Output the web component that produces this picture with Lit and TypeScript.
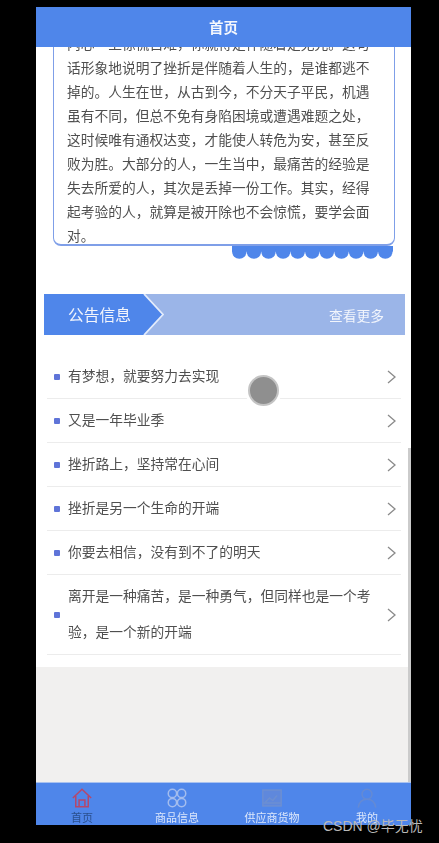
import { LitElement, html, css, svg } from "lit";
import { customElement } from "lit/decorators.js";

const para =
  "内心一上惊慌自难，你就得是伴随着是无光。这句话形象地说明了挫折是伴随着人生的，是谁都逃不掉的。人生在世，从古到今，不分天子平民，机遇虽有不同，但总不免有身陷困境或遭遇难题之处，这时候唯有通权达变，才能使人转危为安，甚至反败为胜。大部分的人，一生当中，最痛苦的经验是失去所爱的人，其次是丢掉一份工作。其实，经得起考验的人，就算是被开除也不会惊慌，要学会面对。";

const notices = [
  "有梦想，就要努力去实现",
  "又是一年毕业季",
  "挫折路上，坚持常在心间",
  "挫折是另一个生命的开端",
  "你要去相信，没有到不了的明天",
  "离开是一种痛苦，是一种勇气，但同样也是一个考验，是一个新的开端",
];

const icons = [
  svg`<path d="M1 12 L12 1.500 L23 12 M4.500 9.500 V22.500 H19.500 V9.500 M8.500 22.500 V14.500 H15.500 V22.500" />`,
  svg`<circle cx="6.500" cy="6.500" r="5"/><circle cx="17.500" cy="6.500" r="5"/><circle cx="6.500" cy="17.500" r="5"/><circle cx="17.500" cy="17.500" r="5"/>`,
  svg`<rect x="1" y="2.500" width="22" height="19" fill="#5f88dc"/><path d="M4 17 L9 12 L13 15 L18 9 M1 18 H23" />`,
  svg`<circle cx="12" cy="7.500" r="6"/><path d="M1.500 23.500 C2.500 16.500 7 13.500 12 13.500 C17 13.500 21.500 16.500 22.500 23.500" />`,
];
const tabs = [
  { label: "首页", cls: "active" },
  { label: "商品信息", cls: "light" },
  { label: "供应商货物", cls: "light2" },
  { label: "我的", cls: "dim" },
];
const scallops = Array.from({ length: 11 }, (_, i) => 7.3 + i * 14.6);

@customElement("app-root")
export class AppRoot extends LitElement {
  static styles = css`
    :host {
      display: block;
      width: 439px;
      height: 843px;
      background: #000;
      position: relative;
      overflow: hidden;
      font-family: "Liberation Sans", "Noto Sans CJK SC", sans-serif;
    }
    .phone {
      margin: 7px 0 0 36px;
      width: 375px;
      height: 818px;
      display: flex;
      flex-direction: column;
      background: #fff;
      filter: blur(0.4px);
    }
    .header {
      height: 40px;
      flex: none;
      background: #4f86ea;
      color: #f4f7fd;
      font-size: 14.500px;
      font-weight: 700;
      display: flex;
      align-items: center;
      justify-content: center;
      padding-bottom: 2px;
      box-sizing: border-box;
      position: relative;
      z-index: 1;
    }
    .main {
      flex: 1;
      min-height: 0;
      overflow: hidden;
      display: flex;
      flex-direction: column;
      position: relative;
    }
    .card-wrap {
      padding: 0 16px 0 17px;
      margin-top: -15px;
      flex: none;
    }
    .card {
      border: 1.500px solid #7f9fe8;
      border-bottom-width: 2px;
      border-radius: 8px;
      padding: 0 12px 0 13px;
      height: 214px;
      box-sizing: border-box;
      font-size: 13.750px;
      line-height: 24px;
      color: #4f4f4f;
      word-break: break-all;
      overflow: hidden;
      background: #fff;
    }
    .scallops {
      display: flex;
      justify-content: flex-end;
      padding: 0 18px 0 0;
      height: 13px;
      flex: none;
    }
    .scallops svg { display: block; fill: #4f86ea; }
    .band {
      margin: 35px 6px 0 8px;
      height: 41px;
      flex: none;
      background: #9bb5e8;
      display: flex;
      align-items: stretch;
      color: #f2f5fc;
    }
    .band-title {
      width: 99px;
      flex: none;
      background: #4f86ea;
      font-size: 15.750px;
      display: flex;
      align-items: center;
      padding-left: 24px;
      box-sizing: border-box;
    }
    .band svg { display: block; flex: none; }
    .band-more {
      flex: 1;
      font-size: 13.750px;
      display: flex;
      align-items: center;
      justify-content: flex-end;
      padding-right: 21px;
    }
    .list {
      margin: 20px 10px 0 11px;
      flex: none;
    }
    .row {
      display: flex;
      align-items: center;
      padding: 3.500px 0 3.500px 7px;
      border-bottom: 1px solid #ececec;
      font-size: 13.750px;
      color: #4f4f4f;
      line-height: 36px;
    }
    .dot {
      width: 6px;
      height: 6px;
      flex: none;
      background: #5f74d8;
      border-radius: 1px;
      margin-right: 8px;
    }
    .text { flex: 1; min-width: 0; }
    .row svg { flex: none; margin: 0 5px 0 8px; display: block; }
    .fill {
      flex: 1;
      background: #f1f0ef;
      margin-top: 12px;
    }
    .scrollbar {
      position: absolute;
      right: 0;
      top: 401px;
      bottom: 0;
      width: 3px;
      background: #cbcbcb;
    }
    .tabbar {
      height: 43px;
      flex: none;
      background: #4f86ea;
      border-top: 1px solid #a9c2f0;
      box-sizing: border-box;
      display: grid;
      grid-template-columns: repeat(4, 95px);
      margin: 0;
      padding: 0;
      overflow: hidden;
    }
    .tab {
      display: flex;
      flex-direction: column;
      align-items: center;
      font-size: 11px;
      line-height: 14px;
      padding-top: 5px;
      position: relative;
      left: -1.500px;
    }
    .tab svg {
      width: 20px;
      height: 20px;
      display: block;
      fill: none;
      stroke-width: 1.800;
      margin-bottom: 3px;
    }
    .active { color: #2a4f8e; }
    .active svg { stroke: #b5476b; }
    .light { color: #dce7fb; }
    .light svg { stroke: #a4bdee; }
    .light2 { color: #dce7fb; }
    .light2 svg { stroke: #6c8fd2; }
    .dim { color: #dce7fb; }
    .dim svg { stroke: #648ad4; }
    .touch {
      position: absolute;
      left: 247.500px;
      top: 375px;
      width: 31px;
      height: 31px;
      border-radius: 50%;
      background: #8f8f8f;
      border: 2px solid #c4c4c4;
      box-sizing: border-box;
      box-shadow: 0 0 0 3px #fff;
    }
    .mark {
      position: absolute;
      left: 323px;
      top: 817px;
      font-size: 14px;
      line-height: 18px;
      color: #b9b9b9;
      white-space: nowrap;
    }
  `;

  render() {
    return html`
      <div class="phone">
        <div class="header">首页</div>
        <div class="main">
          <div class="card-wrap"><div class="card">${para}</div></div>
          <div class="scallops">
            <svg width="161" height="13" viewBox="0 0 161 13">
              <rect x="0" y="0" width="161" height="5.500" />
              ${scallops.map((x) => svg`<circle cx=${x} cy="5.500" r="7.300" />`)}
            </svg>
          </div>
          <div class="band">
            <div class="band-title">公告信息</div>
            <svg width="21" height="41" viewBox="0 0 21 41">
              <path d="M0 0H1L20 20.500L1 41H0Z" fill="#4f86ea"/>
              <path d="M1 0L20 20.500L1 41" fill="none" stroke="#e4ecfb" stroke-width="1.800"/>
            </svg>
            <div class="band-more">查看更多</div>
          </div>
          <div class="list">
            ${notices.map(
              (t) => html`<div class="row">
                <span class="dot"></span>
                <span class="text">${t}</span>
                <svg width="9" height="14" viewBox="0 0 9 14" fill="none" stroke="#8a8a8a" stroke-width="1.300"><path d="M1 1L8 7L1 13"/></svg>
              </div>`
            )}
          </div>
          <div class="fill"></div>
          <div class="scrollbar"></div>
        </div>
        <div class="tabbar">
          ${tabs.map(
            (t, i) => html`<div class="tab ${t.cls}">
              <svg viewBox="0 0 24 24">${icons[i]}</svg>
              <span>${t.label}</span>
            </div>`
          )}
        </div>
      </div>
      <div class="touch"></div>
      <div class="mark">CSDN @毕无忧</div>
    `;
  }
}
